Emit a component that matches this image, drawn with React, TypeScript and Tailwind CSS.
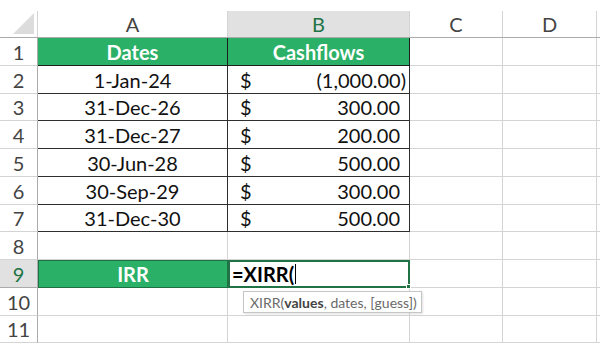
import React from "react";

const rowHeights = [28, 28, 27, 28, 28, 28, 27, 28, 28, 28, 27];

const rows = [
  { date: "1-Jan-24", value: "(1,000.00)" },
  { date: "31-Dec-26", value: "300.00" },
  { date: "31-Dec-27", value: "200.00" },
  { date: "30-Jun-28", value: "500.00" },
  { date: "30-Sep-29", value: "300.00" },
  { date: "31-Dec-30", value: "500.00" },
];

const App: React.FC = () => {
  return (
    <div
      className="w-[600px] h-[349px] bg-white overflow-hidden pt-[11px] relative text-[20px] text-[#111]"
      style={{ fontFamily: "Lato, 'Open Sans', sans-serif" }}
    >
      {/* Column headers */}
      <div className="flex h-[27px] border-b border-[#ababab]">
        <div className="w-[38px] shrink-0 border-r border-[#d4d4d4] relative">
          <div className="absolute right-[3px] bottom-[3px] w-0 h-0 border-l-[21px] border-l-transparent border-b-[21px] border-b-[#dcdcdc]" />
        </div>
        <div className="w-[190px] shrink-0 border-r border-[#d4d4d4] flex items-center justify-center text-[#444]">A</div>
        <div className="w-[182px] shrink-0 border-r border-[#d4d4d4] bg-[#e1e1e1] flex items-center justify-center text-[#217346]">B</div>
        <div className="w-[93px] shrink-0 border-r border-[#d4d4d4] flex items-center justify-center text-[#444]">C</div>
        <div className="w-[94px] shrink-0 border-r border-[#d4d4d4] flex items-center justify-center text-[#444]">D</div>
        <div className="w-[3px] shrink-0" />
      </div>

      {/* Row 1: headers */}
      <div className="flex" style={{ height: rowHeights[0] }}>
        <RowNum n={1} />
        <div className="w-[190px] shrink-0 bg-[#2bb067] border-r border-b border-[#1d1d1d] flex items-center justify-center font-bold text-white">Dates</div>
        <div className="w-[182px] shrink-0 bg-[#2bb067] border-r border-b border-[#1d1d1d] flex items-center justify-center font-bold text-white">Cashflows</div>
        <Blank />
      </div>

      {/* Rows 2-7: data */}
      {rows.map((r, i) => (
        <div key={r.date} className="flex" style={{ height: rowHeights[i + 1] }}>
          <RowNum n={i + 2} />
          <div className="w-[190px] shrink-0 border-r border-b border-[#2e2e2e] flex items-center justify-center">{r.date}</div>
          <div className="w-[182px] shrink-0 border-r border-b border-[#2e2e2e] flex items-center justify-between pl-[12px] pr-[3px]">
            <span>$</span>
            <span className={r.value.startsWith("(") ? "" : "pr-[6px]"}>{r.value}</span>
          </div>
          <Blank />
        </div>
      ))}

      {/* Row 8 */}
      <div className="flex" style={{ height: rowHeights[7] }}>
        <RowNum n={8} />
        <div className="w-[190px] shrink-0 border-r border-b border-[#d4d4d4]" />
        <div className="w-[182px] shrink-0 border-r border-b border-[#d4d4d4]" />
        <Blank />
      </div>

      {/* Row 9: IRR + active cell */}
      <div className="flex" style={{ height: rowHeights[8] }}>
        <div className="w-[38px] shrink-0 bg-[#e1e1e1] border-r border-b border-[#ababab] flex items-center justify-center text-[#217346]">9</div>
        <div className="w-[190px] shrink-0 bg-[#2bb067] border border-[#1e7145] flex items-center justify-center font-bold text-white">IRR</div>
        <div className="w-[182px] shrink-0 border-2 border-[#217346] flex items-center pl-[2px] font-bold text-black text-[20px] relative">
          =XIRR(<span className="inline-block w-px h-[20px] bg-black ml-[1px]" />
          <div className="absolute -right-[3px] -bottom-[3px] w-[5px] h-[5px] bg-[#217346] border border-white" />
        </div>
        <Blank />
      </div>

      {/* Rows 10-11 */}
      {[10, 11].map((n) => (
        <div key={n} className="flex" style={{ height: rowHeights[n - 1] }}>
          <RowNum n={n} />
          <div className="w-[190px] shrink-0 border-r border-b border-[#d4d4d4]" />
          <div className="w-[182px] shrink-0 border-r border-b border-[#d4d4d4]" />
          <Blank />
        </div>
      ))}

      {/* Function tooltip */}
      <div className="absolute left-[243px] top-[291px] w-[179px] h-[22px] bg-white border border-[#c6c6c6] shadow-[1px_1px_2px_rgba(0,0,0,0.12)] flex items-center pl-[6px] text-[14px] text-[#6a6a6a] whitespace-nowrap">
        XIRR(<b className="text-[#444]">values</b>, dates, [guess])
      </div>
    </div>
  );
};

const RowNum: React.FC<{ n: number }> = ({ n }) => (
  <div className="w-[38px] shrink-0 border-r border-b border-[#d4d4d4] border-r-[#ababab] flex items-center justify-center text-[#444]">
    {n}
  </div>
);

const Blank: React.FC = () => (
  <>
    <div className="w-[93px] shrink-0 border-r border-b border-[#d4d4d4]" />
    <div className="w-[94px] shrink-0 border-r border-b border-[#d4d4d4]" />
    <div className="w-[3px] shrink-0 border-b border-[#d4d4d4]" />
  </>
);

export default App;
